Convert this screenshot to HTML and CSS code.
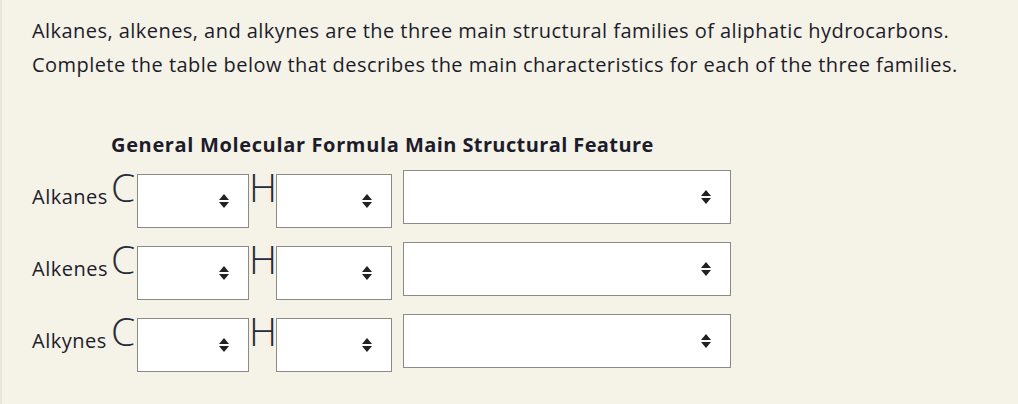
FILE: index.html
```html
<!DOCTYPE html>
<html>
<head>
<meta charset="utf-8">
<link rel="stylesheet" href="styles.css">
</head>
<body>
<div class="page">
  <p class="intro">Alkanes, alkenes, and alkynes are the three main structural families of aliphatic hydrocarbons.<br>Complete the table below that describes the main characteristics for each of the three families.</p>
  <div class="table">
    <div class="head">
      <span class="h-formula">General Molecular Formula</span>
      <span class="h-feature">Main Structural Feature</span>
    </div>
    <div class="row">
      <span class="label">Alkanes</span>
      <span class="el el-c">C</span>
      <div class="sel sel-c"><svg class="arrow" viewBox="0 0 10 14" width="10" height="14"><path d="M0 6L5 0L10 6Z M0 8L10 8L5 14Z"/></svg></div>
      <span class="el el-h">H</span>
      <div class="sel sel-h"><svg class="arrow" viewBox="0 0 10 14" width="10" height="14"><path d="M0 6L5 0L10 6Z M0 8L10 8L5 14Z"/></svg></div>
      <div class="sel sel-f"><svg class="arrow" viewBox="0 0 10 14" width="10" height="14"><path d="M0 6L5 0L10 6Z M0 8L10 8L5 14Z"/></svg></div>
    </div>
    <div class="row">
      <span class="label">Alkenes</span>
      <span class="el el-c">C</span>
      <div class="sel sel-c"><svg class="arrow" viewBox="0 0 10 14" width="10" height="14"><path d="M0 6L5 0L10 6Z M0 8L10 8L5 14Z"/></svg></div>
      <span class="el el-h">H</span>
      <div class="sel sel-h"><svg class="arrow" viewBox="0 0 10 14" width="10" height="14"><path d="M0 6L5 0L10 6Z M0 8L10 8L5 14Z"/></svg></div>
      <div class="sel sel-f"><svg class="arrow" viewBox="0 0 10 14" width="10" height="14"><path d="M0 6L5 0L10 6Z M0 8L10 8L5 14Z"/></svg></div>
    </div>
    <div class="row">
      <span class="label">Alkynes</span>
      <span class="el el-c">C</span>
      <div class="sel sel-c"><svg class="arrow" viewBox="0 0 10 14" width="10" height="14"><path d="M0 6L5 0L10 6Z M0 8L10 8L5 14Z"/></svg></div>
      <span class="el el-h">H</span>
      <div class="sel sel-h"><svg class="arrow" viewBox="0 0 10 14" width="10" height="14"><path d="M0 6L5 0L10 6Z M0 8L10 8L5 14Z"/></svg></div>
      <div class="sel sel-f"><svg class="arrow" viewBox="0 0 10 14" width="10" height="14"><path d="M0 6L5 0L10 6Z M0 8L10 8L5 14Z"/></svg></div>
    </div>
  </div>
</div>
</body>
</html>
```
FILE: styles.css
```css
html, body {
  margin: 0;
  padding: 0;
  background: #f5f2e7;
}
body {
  font-family: "Open Sans", "Noto Sans", sans-serif;
  color: #1c1c2b;
  width: 1018px;
  height: 404px;
  overflow: hidden;
}
.page {
  height: 404px;
  box-sizing: border-box;
  border-left: 2px solid #e8e6df;
  padding: 14px 0 0 30px;
}
.intro {
  margin: 0;
  font-size: 20px;
  line-height: 34px;
  letter-spacing: 0.45px;
  white-space: nowrap;
}
.table {
  margin-top: 53px;
}
.head {
  display: flex;
  margin-left: 79px;
  font-weight: 700;
  font-size: 20px;
  line-height: 20px;
}
.h-formula {
  width: 294px;
  white-space: nowrap;
  letter-spacing: 0.65px;
}
.h-feature {
  white-space: nowrap;
  letter-spacing: 0.4px;
}
.row {
  display: flex;
  align-items: flex-start;
  margin-top: 15px;
  height: 57px;
}
.row + .row {
  margin-top: 15px;
}
.label {
  width: 79px;
  font-size: 20px;
  line-height: 20px;
  letter-spacing: 0.5px;
  margin-top: 17px;
}
.el {
  font-weight: 300;
  font-size: 39px;
  line-height: 28px;
  margin-top: 3px;
  color: #262b36;
}
.el-c { width: 26px; }
.el-h { width: 27px; }
.sel {
  box-sizing: border-box;
  height: 54px;
  background: #ffffff;
  border: 1px solid #8d8a83;
  display: flex;
  align-items: center;
  justify-content: flex-end;
  padding-right: 19px;
}
.sel-c { width: 112px; margin-top: 4px; }
.sel-h { width: 116px; margin-top: 4px; }
.sel-f { width: 328px; margin-left: 11px; }
.arrow {
  fill: #222222;
  display: block;
}
```
